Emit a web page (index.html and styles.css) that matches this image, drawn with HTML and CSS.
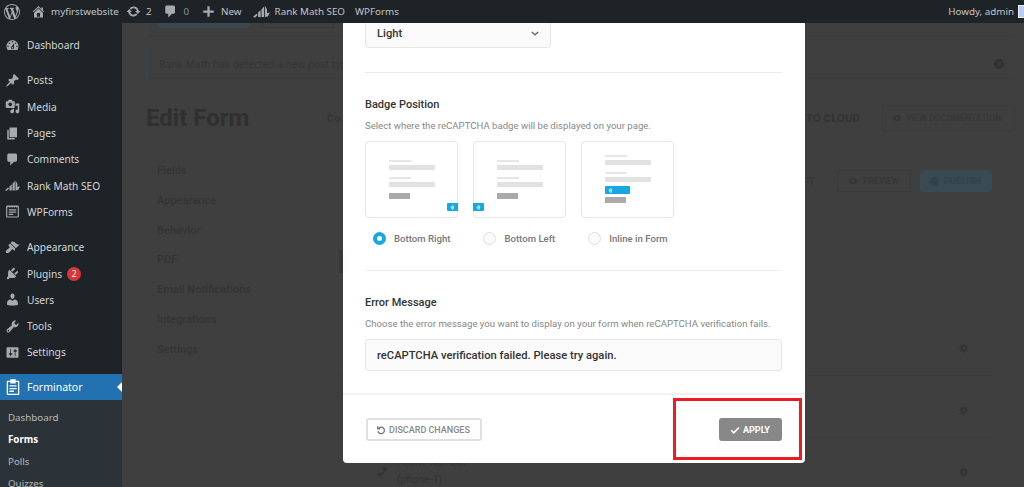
FILE: index.html
```html
<!DOCTYPE html>
<html lang="en">
<head>
<meta charset="utf-8">
<title>Edit Form</title>
<link rel="stylesheet" href="styles.css">
</head>
<body>
<svg class="defs" width="0" height="0" aria-hidden="true">
  <symbol id="i-wp" viewBox="0 0 20 20"><path d="M20 10c0-5.51-4.49-10-10-10C4.48 0 0 4.49 0 10c0 5.52 4.48 10 10 10 5.51 0 10-4.48 10-10zM7.78 15.37L4.37 6.22c.55-.02 1.17-.08 1.17-.08.5-.06.44-1.13-.06-1.11 0 0-1.45.11-2.37.11-.18 0-.37 0-.58-.01C4.12 2.69 6.87 1.11 10 1.11c2.33 0 4.45.87 6.05 2.34-.68-.11-1.65.39-1.65 1.58 0 .74.45 1.36.9 2.1.35.61.55 1.36.55 2.46 0 1.49-1.4 5-1.4 5l-3.03-8.37c.54-.02.82-.17.82-.17.5-.05.44-1.25-.06-1.22 0 0-1.44.12-2.38.12-.87 0-2.33-.12-2.33-.12-.5-.03-.56 1.2-.06 1.22l.92.08 1.26 3.41zM17.41 10c.24-.64.74-1.87.43-4.25.7 1.29 1.05 2.71 1.05 4.25 0 3.29-1.73 6.24-4.4 7.78.97-2.59 1.94-5.2 2.92-7.78zM6.1 18.09C3.12 16.65 1.11 13.53 1.11 10c0-1.3.23-2.48.72-3.59C3.25 10.3 4.67 14.2 6.1 18.09zm4.03-6.63l2.58 6.98c-.86.29-1.76.45-2.71.45-.79 0-1.57-.11-2.29-.33.81-2.38 1.62-4.74 2.42-7.1z"/></symbol>
  <symbol id="i-home" viewBox="0 0 20 20"><path d="M16 8.5l1.53 1.53-1.06 1.06L10 4.62l-6.47 6.47-1.06-1.06L10 2.5l4 4v-2h2v4zm-6-2.46l6 5.99V18H4v-5.97zM12 17v-5H8v5h4z"/></symbol>
  <symbol id="i-update" viewBox="0 0 20 20"><path d="M10.2 3.28c3.53 0 6.43 2.61 6.92 6h2.08l-3.5 4-3.5-4h2.32c-.45-1.97-2.21-3.45-4.32-3.45-1.45 0-2.73.71-3.54 1.78L4.95 5.66C6.23 4.2 8.11 3.28 10.2 3.28zm-.4 13.44c-3.52 0-6.43-2.61-6.92-6H.8l3.5-4c1.17 1.33 2.33 2.67 3.5 4H5.48c.45 1.97 2.21 3.45 4.32 3.45 1.45 0 2.73-.71 3.54-1.78l1.71 1.95c-1.28 1.46-3.15 2.38-5.25 2.38z"/></symbol>
  <symbol id="i-comment" viewBox="0 0 20 20"><path d="M5 2h9c1.1 0 2 .9 2 2v7c0 1.1-.9 2-2 2h-2l-5 5v-5H5c-1.1 0-2-.9-2-2V4c0-1.1.9-2 2-2z"/></symbol>
  <symbol id="i-plus" viewBox="0 0 20 20"><path d="M17 8.500v3h-5.500V17h-3v-5.500H3v-3h5.500V3h3v5.500z"/></symbol>
  <symbol id="i-rank" viewBox="0 0 20 20"><path d="M0 16.500l4-4 1.500 1.500-3 3zM6 16.500v-5.500l3-2.500v8zM10 16.500V7.500l3-3.500v12.500zM14 16.500V3l2.500 4.500V12l3.500-1-2.500 5z"/></symbol>
  <symbol id="i-forms" viewBox="0 0 20 20"><path fill-rule="evenodd" d="M3 2h14a1.500 1.500 0 0 1 1.500 1.500v13A1.500 1.500 0 0 1 17 18H3a1.500 1.500 0 0 1-1.500-1.500v-13A1.500 1.500 0 0 1 3 2zm0 1.500v13h14v-13l-1.500 1.500-1.500-1.500-1.500 1.500-1.500-1.500-1.500 1.500-1.500-1.500-1.500 1.500-1.500-1.500-1.500 1.500zM5 7h10v1.500H5zm0 3h10v1.500H5zm0 3h6v1.500H5z"/></symbol>
  <symbol id="i-dash" viewBox="0 0 20 20"><path d="M3.760 16h12.480c1.100-1.370 1.760-3.110 1.760-5 0-4.420-3.580-8-8-8s-8 3.580-8 8c0 1.890.66 3.630 1.760 5zM10 4c.55 0 1 .45 1 1s-.45 1-1 1-1-.45-1-1 .45-1 1-1zM6 6c.55 0 1 .45 1 1s-.45 1-1 1-1-.45-1-1 .45-1 1-1zm8 0c.55 0 1 .45 1 1s-.45 1-1 1-1-.45-1-1 .45-1 1-1zm-5.370 5.550L12 7v6c0 1.100-.9 2-2 2s-2-.9-2-2c0-.57.24-1.080.63-1.450zM4 10c.55 0 1 .45 1 1s-.45 1-1 1-1-.45-1-1 .45-1 1-1zm12 0c.55 0 1 .45 1 1s-.45 1-1 1-1-.45-1-1 .45-1 1-1zm-5 3c0-.55-.45-1-1-1s-1 .45-1 1 .45 1 1 1 1-.45 1-1z"/></symbol>
  <symbol id="i-pin" viewBox="0 0 20 20"><path d="M10.440 3.020l1.820-1.820 6.360 6.350-1.830 1.820c-1.050-.68-2.480-.57-3.410.36l-.75.75c-.92.93-1.040 2.350-.35 3.410l-1.830 1.820-2.410-2.410-2.800 2.790c-.42.42-3.380 2.710-3.800 2.290s1.860-3.390 2.280-3.810l2.790-2.790L4.100 9.360l1.830-1.820c1.050.69 2.480.57 3.400-.36l.75-.75c.93-.92 1.050-2.350.36-3.410z"/></symbol>
  <symbol id="i-media" viewBox="0 0 20 20"><path d="M13 11V4c0-.55-.45-1-1-1h-1.670L9 1H5L3.670 3H2c-.55 0-1 .45-1 1v7c0 .55.45 1 1 1h10c.55 0 1-.45 1-1zM7 4.500c1.380 0 2.500 1.120 2.500 2.500S8.380 9.500 7 9.500 4.500 8.380 4.500 7 5.620 4.500 7 4.500zM14 6h5v10.500c0 1.380-1.120 2.500-2.500 2.500S14 17.880 14 16.500s1.120-2.500 2.500-2.500c.17 0 .34.02.5.05V9h-3V6zm-4 8.050V13h2v3.500c0 1.380-1.120 2.500-2.500 2.500S7 17.880 7 16.500 8.120 14 9.500 14c.17 0 .34.02.5.05z"/></symbol>
  <symbol id="i-page" viewBox="0 0 20 20"><path d="M6 15V2h10v13H6zm-1 1h8v2H3V5h2v11z"/></symbol>
  <symbol id="i-brush" viewBox="0 0 20 20"><path d="M14.480 11.060L7.410 3.990l1.500-1.500c.5-.56 2.300-.47 3.510.32 1.210.8 1.430 1.280 2.910 2.100 1.180.64 2.450 1.260 4.450.85zm-.71.71L6.700 4.700 4.930 6.470c-.39.39-.39 1.020 0 1.410l1.060 1.060c.39.39.39 1.030 0 1.420-.6.6-1.430 1.110-2.210 1.690-.35.26-.7.53-1.010.84C1.430 13.230.5 16.050 1.500 17.050s3.820.07 5.140-1.270c.31-.31.59-.66.85-1.010.58-.79 1.090-1.610 1.690-2.210.39-.39 1.020-.39 1.410 0l1.060 1.060c.39.39 1.020.39 1.410 0z"/></symbol>
  <symbol id="i-plug" viewBox="0 0 20 20"><path d="M13.110 4.360L9.870 7.600 8 5.730l3.240-3.240c.35-.34 1.050-.2 1.560.32.52.51.66 1.210.31 1.550zm-8 1.770l.91-1.120 9.010 9.010-1.190.84c-.71.71-2.630 1.160-3.820 1.160H6.140L4.900 17.260c-.59.59-1.540.59-2.120 0-.59-.58-.59-1.530 0-2.120l1.240-1.240v-3.880c0-1.130.4-3.190 1.090-3.890zm7.260 3.970l3.240-3.240c.34-.35 1.040-.21 1.550.31.52.51.66 1.210.31 1.550l-3.240 3.250z"/></symbol>
  <symbol id="i-user" viewBox="0 0 20 20"><path d="M10 9.250c-2.270 0-2.730-3.440-2.730-3.440C7 4.020 7.820 2 9.970 2c2.160 0 2.980 2.020 2.710 3.810 0 0-.41 3.440-2.680 3.440zm0 2.570L12.720 10c2.390 0 4.520 2.330 4.520 4.530v2.490s-3.650 1.130-7.240 1.130c-3.650 0-7.240-1.130-7.240-1.130v-2.490c0-2.250 1.940-4.480 4.470-4.480z"/></symbol>
  <symbol id="i-tool" viewBox="0 0 20 20"><path d="M16.680 9.770c-1.340 1.340-3.300 1.670-4.950.99l-5.410 6.520c-.99.99-2.590.99-3.580 0s-.99-2.590 0-3.570l6.520-5.420c-.68-1.650-.35-3.610.99-4.950 1.280-1.280 3.120-1.620 4.720-1.060l-2.890 2.890 2.820 2.820 2.860-2.870c.53 1.580.18 3.390-1.080 4.650zM3.810 16.210c.4.39 1.040.39 1.430 0 .4-.4.4-1.040 0-1.430-.39-.4-1.030-.4-1.430 0-.39.39-.39 1.030 0 1.430z"/></symbol>
  <symbol id="i-set" viewBox="0 0 20 20"><path d="M18 16V4c0-.55-.45-1-1-1H3c-.55 0-1 .45-1 1v12c0 .55.45 1 1 1h14c.55 0 1-.45 1-1zM8 11h1c.55 0 1 .45 1 1s-.45 1-1 1H8v1.500c0 .28-.22.5-.5.5s-.5-.22-.5-.5V13H6c-.55 0-1-.45-1-1s.45-1 1-1h1V5.500c0-.28.22-.5.5-.5s.5.22.5.5V11zm5-2h-1c-.55 0-1-.45-1-1s.45-1 1-1h1V5.500c0-.28.22-.5.5-.5s.5.22.5.5V7h1c.55 0 1 .45 1 1s-.45 1-1 1h-1v5.500c0 .28-.22.5-.5.5s-.5-.22-.5-.5V9z"/></symbol>
  <symbol id="i-clip" viewBox="0 0 20 20"><path fill-rule="evenodd" d="M4 3h3V1.500h6V3h3a1 1 0 0 1 1 1v14a1 1 0 0 1-1 1H4a1 1 0 0 1-1-1V4a1 1 0 0 1 1-1zm.500 1.500v13h11v-13H13V6H7V4.500zM6 8h8v1.500H6zm0 3h8v1.500H6zm0 3h5v1.500H6z"/></symbol>
  <symbol id="i-gear" viewBox="0 0 20 20"><path d="M18 12h-2.180c-.17.7-.44 1.350-.81 1.930l1.540 1.540-2.100 2.100-1.540-1.540c-.58.36-1.230.63-1.910.79V19H8v-2.180c-.68-.16-1.330-.43-1.910-.79l-1.540 1.540-2.120-2.120 1.540-1.540c-.36-.58-.63-1.230-.79-1.910H1V9.030h2.170c.16-.7.44-1.350.8-1.940L2.430 5.550l2.100-2.100 1.540 1.540c.58-.37 1.240-.64 1.930-.81V2h3v2.180c.68.16 1.330.43 1.910.79l1.540-1.540 2.120 2.120-1.540 1.540c.36.59.64 1.240.8 1.940H18V12zm-8.500 1.500c1.660 0 3-1.340 3-3s-1.340-3-3-3-3 1.340-3 3 1.340 3 3 3z"/></symbol>
  <symbol id="i-phone" viewBox="0 0 20 20"><path d="M12.060 6l-.21-.2c-.52-.54-.43-.79.08-1.300l2.720-2.750c.81-.82.96-1.210 1.730-.48l.21.2zm.53.45l4.400-4.400c.7.94 2.340 3.470 1.530 5.340-.73 1.670-1.090 1.750-2 3-1.850 2.110-4.180 4.370-6 6.070-1.260.91-1.310 1.330-3 2-1.800.71-4.400-.89-5.380-1.560l4.400-4.400 1.180 1.620c.34.46 1.200-.06 1.800-.66 1.040-1.050 3.180-3.180 4-4.070.59-.59 1.120-1.450.66-1.800zM1.570 16.500l-.21-.21c-.68-.74-.29-.9.52-1.700l2.740-2.720c.51-.49.75-.6 1.270-.11l.2.21z"/></symbol>
  <symbol id="i-eye" viewBox="0 0 20 20"><path fill-rule="evenodd" d="M10 4c4.500 0 8 4 9.500 6-1.500 2-5 6-9.500 6S2 12 .5 10C2 8 5.500 4 10 4zm0 3a3 3 0 1 0 0 6 3 3 0 0 0 0-6z"/></symbol>
  <symbol id="i-close" viewBox="0 0 20 20"><path fill-rule="evenodd" d="M10 0a10 10 0 1 1 0 20 10 10 0 0 1 0-20zM6.500 5L5 6.500 8.500 10 5 13.500 6.500 15l3.500-3.500 3.500 3.500 1.500-1.500-3.500-3.500L15 6.500 13.500 5 10 8.500z"/></symbol>
  <symbol id="i-badge" viewBox="0 0 12 12"><path fill="none" stroke="#fff" stroke-width="2.200" d="M9.500 3.300A3.800 3.800 0 1 0 9.500 8.700M5.500 5.800H10"/></symbol>
</svg>

<header class="topbar">
  <div class="top-left">
    <svg class="top-wp"><use href="#i-wp"/></svg>
    <span class="top-item gap-site"><svg class="top-ico"><use href="#i-home"/></svg>myfirstwebsite</span>
    <span class="top-item gap-upd"><svg class="top-ico"><use href="#i-update"/></svg>2</span>
    <span class="top-item gap-com"><svg class="top-ico"><use href="#i-comment"/></svg><span class="dim">0</span></span>
    <span class="top-item gap-new"><svg class="top-ico"><use href="#i-plus"/></svg>New</span>
    <span class="top-item gap-rank"><svg class="top-ico wide"><use href="#i-rank"/></svg>Rank Math SEO</span>
    <span class="top-item gap-wpf">WPForms</span>
  </div>
  <div class="top-right">Howdy, admin<span class="avatar"></span></div>
</header>

<div class="shell">
  <nav class="sidebar">
    <a class="menu"><svg class="ico"><use href="#i-dash"/></svg>Dashboard</a>
    <div class="sep"></div>
    <a class="menu"><svg class="ico"><use href="#i-pin"/></svg>Posts</a>
    <a class="menu"><svg class="ico"><use href="#i-media"/></svg>Media</a>
    <a class="menu"><svg class="ico"><use href="#i-page"/></svg>Pages</a>
    <a class="menu"><svg class="ico"><use href="#i-comment"/></svg>Comments</a>
    <a class="menu"><svg class="ico"><use href="#i-rank"/></svg>Rank Math SEO</a>
    <a class="menu"><svg class="ico"><use href="#i-forms"/></svg>WPForms</a>
    <div class="sep"></div>
    <a class="menu"><svg class="ico"><use href="#i-brush"/></svg>Appearance</a>
    <a class="menu"><svg class="ico"><use href="#i-plug"/></svg>Plugins<span class="count">2</span></a>
    <a class="menu"><svg class="ico"><use href="#i-user"/></svg>Users</a>
    <a class="menu"><svg class="ico"><use href="#i-tool"/></svg>Tools</a>
    <a class="menu"><svg class="ico"><use href="#i-set"/></svg>Settings</a>
    <div class="sep short"></div>
    <a class="menu current"><svg class="ico big"><use href="#i-clip"/></svg>Forminator</a>
    <div class="submenu">
      <a class="sub">Dashboard</a>
      <a class="sub on">Forms</a>
      <a class="sub">Polls</a>
      <a class="sub">Quizzes</a>
    </div>
  </nav>

  <main class="page">
    <div class="notice-one"><span class="bg-btn solid"></span><span class="bg-btn line"></span></div>
    <div class="notice-two">
      <span>Rank Math has detected a new post type.</span>
      <svg class="close-ico"><use href="#i-close"/></svg>
    </div>
    <div class="title-row">
      <h1>Edit Form</h1>
      <span class="title-tab">Co</span>
      <span class="title-actions">
        <b>SAVE TO CLOUD</b>
        <span class="doc-box"><svg class="bg-ico"><use href="#i-eye"/></svg>VIEW DOCUMENTATION</span>
      </span>
    </div>
    <div class="form-area">
      <ul class="side-nav">
        <li>Fields</li>
        <li>Appearance</li>
        <li>Behavior</li>
        <li>PDF</li>
        <li>Email Notifications</li>
        <li>Integrations</li>
        <li>Settings</li>
      </ul>
      <div class="form-main">
        <div class="bar-row">
          <span class="bg-draft">SAVE DRAFT</span>
          <span class="bg-preview"><svg class="bg-ico"><use href="#i-eye"/></svg>PREVIEW</span>
          <span class="bg-publish"><i class="pub-dot"></i>PUBLISH</span>
        </div>
        <div class="fields">
          <div class="field-row"><svg class="gear"><use href="#i-gear"/></svg></div>
          <div class="field-row"><svg class="gear"><use href="#i-gear"/></svg></div>
          <div class="field-row plain"><svg class="gear"><use href="#i-gear"/></svg></div>
        </div>
      </div>
    </div>
    <div class="phone-row">
      <svg class="phone-ico"><use href="#i-phone"/></svg>
      <div class="phone-text">
        <span class="phone-name">Phone Number</span>
        <span class="phone-id">(phone-1)</span>
      </div>
    </div>
  </main>
</div>

<section class="modal">
  <div class="modal-body">
    <div class="select"><span>Light</span>
      <svg class="chev" viewBox="0 0 10 6"><path d="M1 1l4 3.600L9 1" fill="none" stroke="#666" stroke-width="1.600"/></svg>
    </div>
    <hr class="rule rule-top">
    <h3>Badge Position</h3>
    <p class="desc">Select where the reCAPTCHA badge will be displayed on your page.</p>
    <div class="cards">
      <div class="card">
        <div class="sk"><i class="s1"></i><i class="s2"></i><i class="s1 next"></i><i class="s2"></i><i class="s3"></i></div>
        <span class="badge br"><svg><use href="#i-badge"/></svg></span>
      </div>
      <div class="card">
        <div class="sk"><i class="s1"></i><i class="s2"></i><i class="s1 next"></i><i class="s2"></i><i class="s3"></i></div>
        <span class="badge bl"><svg><use href="#i-badge"/></svg></span>
      </div>
      <div class="card">
        <div class="sk inline"><i class="s1"></i><i class="s2"></i><i class="s1 next"></i><i class="s2"></i>
          <span class="badge wide"><svg><use href="#i-badge"/></svg></span><i class="s3 tight"></i></div>
      </div>
    </div>
    <div class="radios">
      <label class="radio r1"><span class="dot on"></span>Bottom Right</label>
      <label class="radio r2"><span class="dot"></span>Bottom Left</label>
      <label class="radio r3"><span class="dot"></span>Inline in Form</label>
    </div>
    <hr class="rule rule-mid">
    <h3>Error Message</h3>
    <p class="desc">Choose the error message you want to display on your form when reCAPTCHA verification fails.</p>
    <div class="input">reCAPTCHA verification failed. Please try again.</div>
  </div>
  <footer class="modal-foot">
    <span class="btn-discard">
      <svg viewBox="0 0 20 20"><path fill="none" stroke="#777" stroke-width="2.600" d="M6 6a6.500 6.500 0 1 1-2 6.500M3.500 2.500V7.500H8.500"/></svg>DISCARD CHANGES</span>
    <span class="btn-apply">
      <svg viewBox="0 0 20 20"><path fill="none" stroke="#fff" stroke-width="3.400" d="M2.500 10.500l5 5L18 5"/></svg>APPLY</span>
  </footer>
</section>
<div class="annotation"></div>
</body>
</html>
```
FILE: styles.css
```css
* { box-sizing: border-box; }
html, body { margin: 0; height: 487px; overflow: hidden; }
body { position: relative; background: #3f3f3f; font-family: "Noto Sans", "Open Sans", sans-serif; }
.defs { position: absolute; }
a { display: block; }
svg { fill: currentColor; display: block; flex: none; }

/* top bar */
.topbar { height: 23px; background: #1d2327; color: #c3c4c7; font-size: 9.8px; display: flex; justify-content: space-between; align-items: center; }
.top-left, .top-right, .top-item { display: flex; align-items: center; }
.top-wp { width: 16px; height: 16px; margin-left: 4px; color: #a7aaad; }
.top-ico { width: 15px; height: 15px; color: #a7aaad; margin-right: 5px; }
.top-ico.wide { width: 17px; height: 17px; margin-right: 5px; }
.gap-site { margin-left: 11px; }
.gap-upd { margin-left: 7px; }
.gap-com { margin-left: 12px; }
.gap-new { margin-left: 12px; }
.gap-rank { margin-left: 11px; }
.gap-wpf { margin-left: 10px; }
.dim { color: #8c8f94; }
.top-right { gap: 4px; }
.avatar { width: 6px; height: 13px; background: #b9cdf0; border: 1px solid #e8eefc; border-right: 0; }

/* sidebar */
.shell { display: flex; height: 464px; }
.sidebar { width: 122px; flex: none; background: #1d2327; color: #d5d6d8; font-size: 10.2px; padding-top: 9px; overflow: hidden; }
.menu { height: 26.3px; display: flex; align-items: center; padding-left: 5px; }
.ico { width: 15px; height: 15px; margin-right: 7px; color: #a7aaad; }
.ico.big { width: 18px; height: 18px; margin-left: -1px; margin-right: 5px; }
.sep { height: 9px; }
.sep.short { height: 8px; }
.count { width: 14px; height: 14px; margin-left: 5px; border-radius: 50%; background: #d63638; color: #fff; font-size: 8.5px; display: flex; align-items: center; justify-content: center; }
.current { position: relative; background: #2271b1; color: #fff; font-size: 10.5px; }
.current .ico { color: #fff; }
.current::after { content: ""; position: absolute; right: 0; top: 8px; border: 5px solid transparent; border-right-color: #fff; border-left: 0; }
.submenu { background: #2c3338; padding: 7px 0 0 8px; color: #b7babd; font-size: 9.75px; }
.sub { height: 22px; line-height: 22px; }
.sub.on { color: #fff; font-weight: 700; }

/* dimmed page behind the dialog */
.page { flex: 1; min-width: 0; padding-left: 24px; color: #363636; font-family: Roboto, sans-serif; overflow: hidden; position: relative; }
.notice-one { height: 13px; width: 869px; border-left: 2px solid #3a444b; border-bottom: 1px solid #3c3c3c; padding-left: 11px; display: flex; gap: 12px; }
.bg-btn { height: 5px; border-radius: 0 0 2px 2px; }
.bg-btn.solid { width: 91px; background: #3a4850; }
.bg-btn.line { width: 72px; border: 1px solid #373737; border-top: 0; }
.notice-two { margin-top: 13px; height: 30px; width: 869px; border-left: 2px solid #3a444b; border-bottom: 1px solid #3c3c3c; padding-left: 11px; display: flex; align-items: center; justify-content: space-between; font-size: 10.2px; font-family: "Noto Sans", sans-serif; color: #353535; white-space: nowrap; }
.close-ico { width: 10px; height: 10px; margin-right: 11px; color: #313131; }
.title-row { display: flex; align-items: center; height: 36px; margin-top: 21px; }
h1 { margin: 0; width: 181px; font-size: 24px; font-weight: 700; color: #303030; white-space: nowrap; }
.title-tab { font-size: 11px; font-weight: 700; color: #353535; }
.title-actions { margin-left: auto; display: flex; align-items: center; gap: 22px; justify-content: flex-end; font-size: 11.5px; color: #333; white-space: nowrap; margin-right: 9px; }
.doc-box { display: flex; align-items: center; gap: 4px; width: 133px; height: 26px; padding-left: 9px; border: 1px solid #3c3c3c; font-size: 8.75px; font-weight: 700; color: #383838; }
.bg-ico { width: 10px; height: 10px; color: #363636; }
.form-area { display: flex; margin-top: 20px; }
.side-nav { margin: 0; padding: 0 0 0 11px; width: 193px; list-style: none; font-size: 11.1px; font-weight: 500; color: #343434; }
.side-nav li { height: 29.8px; line-height: 29.8px; white-space: nowrap; }
.form-main { position: relative; flex: 1; }
.form-main::before { content: ""; position: absolute; left: 0; top: 94px; width: 4px; height: 23px; background: #3a3538; }
.bar-row { display: flex; justify-content: flex-end; align-items: center; height: 22px; margin-top: 14px; padding-right: 32px; font-size: 9px; font-weight: 700; white-space: nowrap; }
.bg-draft { margin-right: 22px; font-size: 10.5px; color: #383838; }
.bg-preview { display: flex; align-items: center; gap: 5px; width: 74px; height: 22px; margin-right: 9px; padding-left: 10px; border: 1px solid #3a3a3a; border-radius: 2px; font-size: 8.6px; color: #383838; }
.bg-publish { display: flex; align-items: center; gap: 5px; width: 72px; height: 22px; padding-left: 10px; background: #3a4a52; border-radius: 2px; color: #32424a; }
.pub-dot { width: 9px; height: 9px; border-radius: 50%; background: #32424a; }
.fields { margin-top: 122px; margin-right: 31px; }
.field-row { height: 62px; padding: 6px 24px 0 0; border-bottom: 1px solid #3c3c3c; display: flex; justify-content: flex-end; align-items: center; }
.field-row.plain { border-bottom: 0; }
.gear { width: 10px; height: 10px; color: #343434; }
.phone-row { position: absolute; left: 254px; top: 431px; display: flex; align-items: center; gap: 10px; font-size: 10.5px; color: #333; line-height: 17px; }
.phone-ico { width: 11px; height: 11px; color: #333; }
.phone-name, .phone-id { display: block; }

/* dialog */
.modal { position: absolute; left: 343px; top: 23px; width: 462px; height: 440px; background: #fff; border-radius: 0 0 4px 4px; color: #333; font-family: Roboto, sans-serif; display: flex; flex-direction: column; }
.modal-body { flex: 1; padding: 0 23px 0 22px; }
.select { width: 186px; height: 25px; padding: 0 11px 3px; background: #fafafa; border: 1px solid #e6e6e6; border-top: 0; border-radius: 0 0 4px 4px; display: flex; align-items: center; justify-content: space-between; font-size: 11.2px; font-weight: 500; color: #333; }
.chev { width: 8px; height: 5px; }
.rule { border: 0; height: 1px; background: #ececec; margin: 0; }
.rule-top { margin-top: 24px; margin-bottom: 24px; }
.rule-mid { margin-top: 25px; margin-bottom: 24px; }
h3 { margin: 0; font-size: 11px; line-height: 16px; font-weight: 500; color: #333; }
.desc { margin: 5px 0 0; font-size: 9.6px; line-height: 15px; color: #888; white-space: nowrap; }
.cards { display: flex; gap: 15px; margin-top: 8px; }
.card { position: relative; width: 93px; height: 77px; border: 1px solid #e6e6e6; border-radius: 4px; display: flex; justify-content: center; }
.sk { width: 46px; padding-top: 18px; }
.sk.inline { padding-top: 13px; }
.sk i { display: block; }
.s1 { width: 22px; height: 2px; background: #e6e6e6; }
.s1.next { margin-top: 7px; }
.s2 { width: 46px; height: 5px; margin-top: 3px; background: #e2e2e2; }
.s3 { width: 21px; height: 6px; margin-top: 6px; background: #aaa; }
.s3.tight { margin-top: 3px; }
.badge { display: flex; align-items: center; padding-left: 3px; height: 8px; background: #17a8e3; }
.badge svg { width: 5px; height: 5px; }
.badge.br, .badge.bl { position: absolute; width: 11px; bottom: 6px; }
.badge.br { right: -1px; border-radius: 1px 0 0 1px; }
.badge.bl { left: -1px; border-radius: 0 1px 1px 0; }
.badge.wide { width: 25px; margin-top: 4px; border-radius: 1px; }
.radios { display: flex; height: 13px; margin-top: 14px; }
.radio { display: flex; align-items: center; font-size: 9.6px; font-weight: 500; color: #777; white-space: nowrap; }
.radio.r1 { margin-left: 8px; }
.radio.r2 { margin-left: 33px; }
.radio.r3 { margin-left: 33px; }
.dot { width: 13px; height: 13px; margin-right: 8px; border-radius: 50%; background: #fafafa; border: 1px solid #e0e0e0; }
.dot.on { background: #fff; border: 4px solid #17a8e3; }
.input { height: 32px; margin-top: 8px; padding: 0 11px; background: #fafafa; border: 1px solid #e6e6e6; border-radius: 3px; display: flex; align-items: center; font-size: 11.2px; font-weight: 500; color: #333; white-space: nowrap; }
.modal-foot { height: 70px; border-top: 2px solid #f2f2f2; padding: 23px 23px 0 23px; display: flex; justify-content: space-between; align-items: flex-start; }
.btn-discard, .btn-apply { height: 23px; display: flex; align-items: center; font-size: 9px; font-weight: 500; border-radius: 3px; white-space: nowrap; }
.btn-discard { width: 116px; padding-left: 8px; gap: 3px; border: 2px solid #e0e0e0; color: #888; }
.btn-discard svg { width: 10px; height: 10px; }
.btn-apply { width: 63px; padding-left: 11px; gap: 3px; background: #888; color: #fff; font-weight: 700; }
.btn-apply svg { width: 10px; height: 10px; }

/* red highlight drawn over the screenshot */
.annotation { position: absolute; left: 673px; top: 398px; width: 129px; height: 62px; border: 3.5px solid #ed1c24; }
```
